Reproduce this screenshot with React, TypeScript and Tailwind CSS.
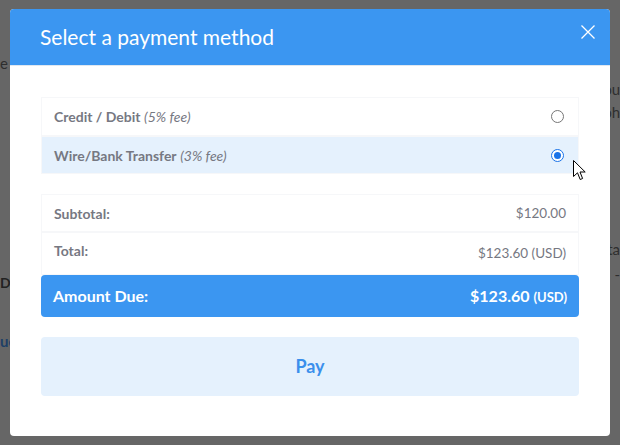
import { useState } from "react";

const methods = [
	{ id: "card", label: "Credit / Debit", fee: "(5% fee)", height: "h-[39px]" },
	{ id: "wire", label: "Wire/Bank Transfer", fee: "(3% fee)", height: "h-[38px]" },
];

function Radio({ checked }: { checked: boolean }) {
	return checked ? (
		<span className="flex h-[13px] w-[13px] items-center justify-center rounded-full border border-[#1a73e8] bg-white">
			<span className="h-[7px] w-[7px] rounded-full bg-[#1a73e8]" />
		</span>
	) : (
		<span className="h-[13px] w-[13px] rounded-full border border-[#767676] bg-white" />
	);
}

export default function App() {
	const [method, setMethod] = useState("wire");

	return (
		<div
			className="relative h-[445px] w-[620px] overflow-hidden bg-[#666666]"
			style={{ fontFamily: "Lato, 'Open Sans', sans-serif" }}
		>
			{/* Page behind the overlay */}
			<div className="flex h-full justify-between text-[15px]">
				<div className="flex flex-col pt-[52px] text-[#2e2e2e]">
					<span>e</span>
					<span className="mt-[197px] text-[14px] font-bold tracking-[-1px] text-[#222]">Di</span>
					<span className="mt-[37px] font-bold text-[#1d3f66]">ue</span>
				</div>
				<div className="flex flex-col items-end pt-[78px] text-[#2e2e2e]">
					<span>ou</span>
					<span>oh</span>
					<span className="mt-[115px]">ta</span>
					<span className="mt-[2px]">-</span>
				</div>
			</div>

			{/* Modal */}
			<div className="absolute left-[10px] top-[9px] flex h-[427px] w-[600px] flex-col overflow-hidden rounded-[4px] bg-white">
				<div className="flex h-[57px] shrink-0 items-center justify-between border-b border-[#dfe7f0] bg-[#3b96f1] pl-[30px] pr-[14px]">
					<h2 className="text-[21px] font-normal text-white">Select a payment method</h2>
					<svg width="16" height="16" viewBox="0 0 16 16" className="mb-[10px]">
						<path d="M1.5 1.5L14.5 14.5M14.5 1.5L1.5 14.5" stroke="#fff" strokeWidth="1.3" />
					</svg>
				</div>

				<div className="flex flex-1 flex-col px-[31px] pt-[31px]">
					<div className="flex flex-col">
						{methods.map((m) => {
							const selected = method === m.id;
							return (
								<button
									type="button"
									key={m.id}
									onClick={() => setMethod(m.id)}
									className={`flex ${m.height} items-center justify-between border border-[#f6f7f9] pl-[12px] pr-[14px] text-left text-[14px] ${selected ? "bg-[#e5f1fd]" : "bg-white"}`}
								>
									<span className="text-[#767882]">
										<span className="font-bold">{m.label}</span>{" "}
										<span className="italic">{m.fee}</span>
									</span>
									<Radio checked={selected} />
								</button>
							);
						})}
					</div>

					<div className="mt-[20px] flex flex-col text-[#767882]">
						<div className="flex h-[38px] items-center justify-between border border-[#f6f7f9] px-[12px]">
							<span className="text-[14px] font-bold">Subtotal:</span>
							<span className="text-[13.5px]">$120.00</span>
						</div>
						<div className="flex h-[43px] items-center justify-between border border-[#f6f7f9] px-[12px]">
							<span className="-mt-[6px] text-[14px] font-bold">Total:</span>
							<span className="text-[13.5px]">$123.60 (USD)</span>
						</div>
						<div className="flex h-[42px] items-center justify-between rounded-[4px] bg-[#3b96f1] px-[12px] font-bold text-white">
							<span className="text-[16px]">Amount Due:</span>
							<span className="text-[16px]">
								$123.60 <span className="text-[13px]">(USD)</span>
							</span>
						</div>
					</div>

					<button
						type="button"
						className="mt-[20px] h-[59px] w-full rounded-[4px] bg-[#e5f1fd] text-[18px] font-bold text-[#3b8fec]"
					>
						Pay
					</button>
				</div>
			</div>

			{/* Mouse cursor */}
			<svg
				width="13"
				height="21"
				viewBox="0 0 13 21"
				className="absolute left-[573px] top-[160px]"
			>
				<path
					d="M0.5 0.5V16.5L4.5 12.8L7.2 19.5L9.6 18.5L7 12H12.2Z"
					fill="#fff"
					stroke="#000"
					strokeWidth="1"
					strokeLinejoin="round"
				/>
			</svg>
		</div>
	);
}
